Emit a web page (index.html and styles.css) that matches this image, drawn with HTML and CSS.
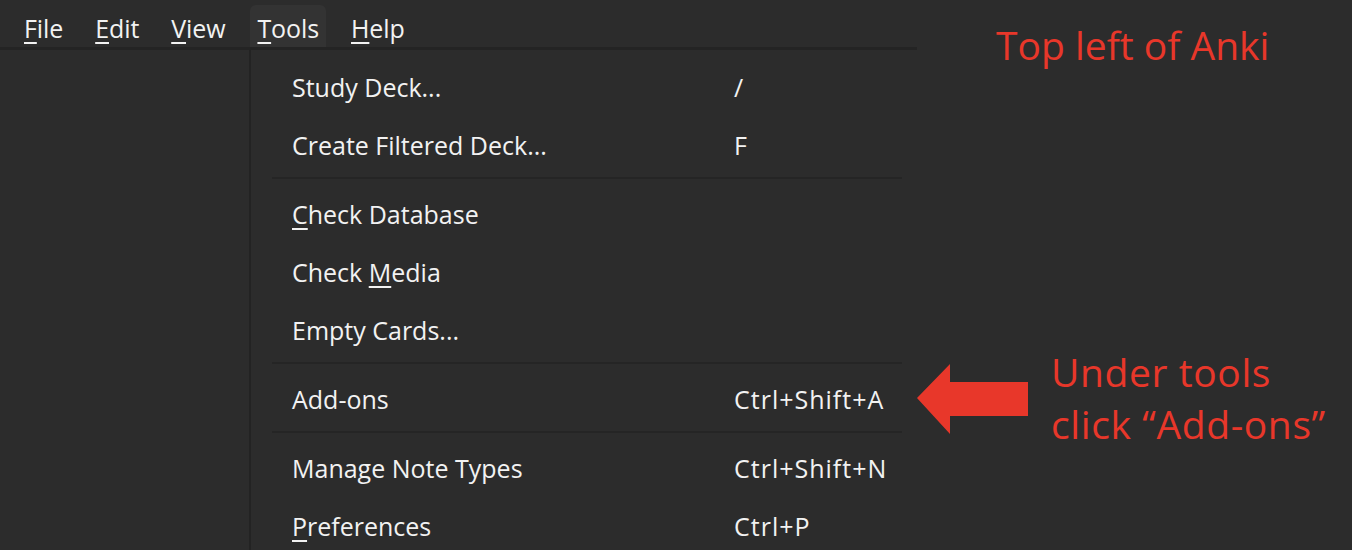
FILE: index.html
```html
<!DOCTYPE html>
<html lang="en">
<head>
<meta charset="utf-8">
<title>Anki Tools menu</title>
<link rel="stylesheet" href="styles.css">
</head>
<body>
<div class="app">
  <nav class="menubar">
    <span class="mb-item"><u>F</u>ile</span>
    <span class="mb-item"><u>E</u>dit</span>
    <span class="mb-item"><u>V</u>iew</span>
    <span class="mb-item active"><u>T</u>ools</span>
    <span class="mb-item"><u>H</u>elp</span>
  </nav>

  <div class="menu">
    <div class="row"><span class="label">Study Deck...</span><span class="key">/</span></div>
    <div class="row"><span class="label">Create Filtered Deck...</span><span class="key">F</span></div>
    <div class="sep"></div>
    <div class="row"><span class="label"><u>C</u>heck Database</span><span class="key"></span></div>
    <div class="row"><span class="label">Check <u>M</u>edia</span><span class="key"></span></div>
    <div class="row"><span class="label">Empty Cards...</span><span class="key"></span></div>
    <div class="sep"></div>
    <div class="row"><span class="label">Add-ons</span><span class="key">Ctrl+Shift+A</span></div>
    <div class="sep"></div>
    <div class="row"><span class="label">Manage Note Types</span><span class="key">Ctrl+Shift+N</span></div>
    <div class="row"><span class="label"><u>P</u>references</span><span class="key">Ctrl+P</span></div>
  </div>

  <div class="note note-top">Top left of Anki</div>

  <svg class="arrow" width="112" height="72" viewBox="0 0 112 72" aria-hidden="true">
    <polygon points="0,34 33,0 33,18 111,18 111,52 33,52 33,70" fill="#e8372a"/>
  </svg>

  <div class="note note-addons">Under tools<br>click “Add-ons”</div>
</div>
</body>
</html>
```

FILE: styles.css
```css
html, body {
  margin: 0;
  padding: 0;
  background: #2c2c2c;
}

.app {
  position: relative;
  width: 1352px;
  height: 550px;
  overflow: hidden;
  background: #2c2c2c;
  font-family: "Open Sans", "Noto Sans", sans-serif;
  color: #f2f2f2;
}

u {
  text-decoration: underline;
  text-underline-offset: 4px;
  text-decoration-thickness: 2px;
}

.menubar {
  display: flex;
  align-items: stretch;
  width: 917px;
  height: 50px;
  box-sizing: border-box;
  padding: 5px 0 0 17px;
  gap: 18px;
  border-bottom: 3px solid #242424;
  font-size: 25px;
  letter-spacing: -0.1px;
}

.mb-item {
  display: flex;
  align-items: center;
  padding: 3px 7px 0;
  border-radius: 6px 6px 0 0;
}

.mb-item.active {
  background: #333333;
}

.menu {
  position: absolute;
  top: 50px;
  left: 249px;
  width: 668px;
  bottom: 0;
  box-sizing: border-box;
  padding-top: 8px;
  border-left: 2px solid #232323;
  background: #2c2c2c;
  font-size: 25px;
  letter-spacing: 0;
}

.row {
  display: flex;
  align-items: center;
  height: 58px;
  padding-left: 41px;
}

.label {
  width: 442px;
  flex: none;
}

.key {
  letter-spacing: 1px;
}

.sep {
  height: 11px;
  box-sizing: border-box;
  margin: 0 15px 0 21px;
  padding-top: 3px;
}

.sep::before {
  content: "";
  display: block;
  height: 2px;
  background: #252525;
}

.note {
  position: absolute;
  color: #e8372a;
  font-family: "Open Sans", "Noto Sans", sans-serif;
  font-size: 39px;
  line-height: 52px;
  letter-spacing: 0;
}

.note-top {
  left: 996px;
  top: 19px;
}

.note-addons {
  left: 1051px;
  top: 346px;
  letter-spacing: 0.6px;
}

.arrow {
  position: absolute;
  left: 917px;
  top: 364px;
}
```
